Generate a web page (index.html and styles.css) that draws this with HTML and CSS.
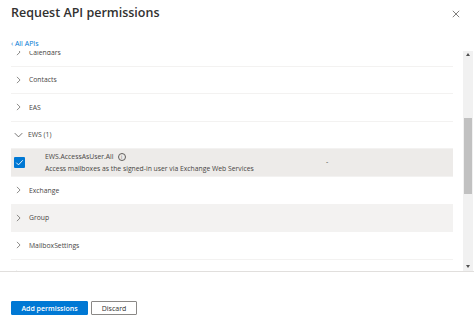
FILE: index.html
```html
<!DOCTYPE html>
<html lang="en">
<head>
    <meta charset="UTF-8">
    <title>Request API permissions</title>
    <link rel="stylesheet" href="styles.css">
</head>
<body>
    <div class="panel">
        <div class="header">
            <h1>Request API permissions</h1>
            <svg class="close" viewBox="0 0 10 10"><path d="M1 1l8 8M9 1l-8 8"/></svg>
        </div>
        <a class="back" href="#">&lsaquo; All APIs</a>

        <div class="list-wrap">
            <div class="list">
                <div class="inner">
                    <div class="row">
                        <svg class="chev" viewBox="0 0 8 12"><path d="M1.5 1l5 5-5 5"/></svg>
                        <span>Calendars</span>
                    </div>
                    <div class="row">
                        <svg class="chev" viewBox="0 0 8 12"><path d="M1.5 1l5 5-5 5"/></svg>
                        <span>Contacts</span>
                    </div>
                    <div class="row">
                        <svg class="chev" viewBox="0 0 8 12"><path d="M1.5 1l5 5-5 5"/></svg>
                        <span>EAS</span>
                    </div>
                    <div class="row">
                        <svg class="chev down" viewBox="0 0 12 8"><path d="M1 1.5l5 5 5-5"/></svg>
                        <span>EWS (1)</span>
                    </div>
                    <div class="perm">
                        <span class="check">
                            <svg viewBox="0 0 12 12"><path d="M2.5 6.2l2.4 2.4 4.6-5"/></svg>
                        </span>
                        <div class="perm-text">
                            <div class="perm-name">EWS.AccessAsUser.All <span class="info">i</span></div>
                            <div>Access mailboxes as the signed-in user via Exchange Web Services</div>
                        </div>
                        <span class="admin">-</span>
                    </div>
                    <div class="row">
                        <svg class="chev" viewBox="0 0 8 12"><path d="M1.5 1l5 5-5 5"/></svg>
                        <span>Exchange</span>
                    </div>
                    <div class="row hover">
                        <svg class="chev" viewBox="0 0 8 12"><path d="M1.5 1l5 5-5 5"/></svg>
                        <span>Group</span>
                    </div>
                    <div class="row">
                        <svg class="chev" viewBox="0 0 8 12"><path d="M1.5 1l5 5-5 5"/></svg>
                        <span>MailboxSettings</span>
                    </div>
                    <div class="row last">
                        <svg class="chev" viewBox="0 0 8 12"><path d="M1.5 1l5 5-5 5"/></svg>
                    </div>
                </div>
            </div>
            <div class="scrollbar">
                <span class="arrow up"></span>
                <div class="thumb"></div>
                <span class="arrow dn"></span>
            </div>
        </div>

        <div class="footer">
            <button class="primary">Add permissions</button>
            <button>Discard</button>
        </div>
    </div>
</body>
</html>
```

FILE: styles.css
```css
body {
    margin: 0;
    font-family: "Open Sans", "Noto Sans", sans-serif;
    color: #323130;
    background: #fff;
}
.panel {
    width: 474px;
    height: 320px;
    overflow: hidden;
}
.header {
    display: flex;
    justify-content: space-between;
    align-items: center;
    padding: 0 14px 0 11px;
    height: 25px;
}
h1 {
    margin: 0;
    font-size: 12.5px;
    font-weight: 600;
    color: #323130;
}
.close {
    width: 8px;
    height: 8px;
    margin-top: 3px;
    fill: none;
    stroke: #605e5c;
    stroke-width: 1;
}
.back {
    display: block;
    margin: 15px 0 0 11px;
    height: 8px;
    line-height: 8px;
    font-size: 7px;
    color: #0078d4;
    text-decoration: none;
}
.list-wrap {
    display: flex;
    margin-top: 3px;
    height: 220px;
    border-bottom: 1px solid #e1dfdd;
}
.list {
    flex: 1;
    overflow: hidden;
    padding-left: 11px;
    padding-right: 10px;
}
.inner {
    margin-top: -12px;
}
.row {
    display: flex;
    align-items: center;
    box-sizing: border-box;
    height: 27.5px;
    border-bottom: 1px solid #f3f2f1;
    font-size: 6.8px;
    color: #484644;
}
.row.hover {
    background: #f3f2f1;
}
.row.last {
    align-items: flex-start;
    padding-top: 10px;
}
.chev {
    width: 5px;
    height: 8px;
    margin: 0 8px 0 5px;
    fill: none;
    stroke: #484644;
    stroke-width: 1;
}
.chev.down {
    width: 9px;
    height: 6px;
    margin: 0 5px 0 3px;
}
.perm {
    display: flex;
    align-items: center;
    box-sizing: border-box;
    height: 28px;
    background: #edebe9;
    font-size: 6.8px;
    color: #484644;
    border-bottom: 1px solid #f3f2f1;
}
.check {
    width: 11px;
    height: 11px;
    margin: 0 20px 0 3px;
    background: #0078d4;
    border-radius: 1px;
    display: flex;
}
.check svg {
    width: 11px;
    height: 11px;
    fill: none;
    stroke: #fff;
    stroke-width: 1;
}
.perm-text {
    line-height: 12px;
    width: 281px;
}
.perm-name {
    display: flex;
    align-items: center;
    gap: 4px;
}
.info {
    width: 6px;
    height: 6px;
    border: 0.8px solid #605e5c;
    border-radius: 50%;
    font-size: 4.5px;
    line-height: 6px;
    text-align: center;
    color: #605e5c;
}
.admin {
    font-size: 7px;
    margin-bottom: 2px;
}
.scrollbar {
    width: 10px;
    margin-right: 1px;
    background: #f1f1f1;
    display: flex;
    flex-direction: column;
    align-items: center;
}
.thumb {
    width: 8px;
    height: 76px;
    background: #c1c1c1;
    margin-top: 62px;
    flex: none;
}
.arrow {
    width: 0;
    height: 0;
    border-left: 2.5px solid transparent;
    border-right: 2.5px solid transparent;
}
.arrow.up {
    margin-top: 2px;
    border-bottom: 3px solid #505050;
}
.arrow.dn {
    margin-top: auto;
    margin-bottom: 3px;
    border-top: 3px solid #505050;
}
.footer {
    display: flex;
    gap: 3px;
    padding: 29px 0 0 11px;
}
button {
    height: 14px;
    padding: 0;
    font-family: inherit;
    font-size: 7px;
    font-weight: 600;
    border: 1px solid #8a8886;
    background: #fff;
    color: #323130;
    border-radius: 1px;
}
button.primary {
    width: 77px;
    background: #0078d4;
    border-color: #0078d4;
    color: #fff;
}
button:not(.primary) {
    width: 46px;
    font-weight: 400;
}
```
